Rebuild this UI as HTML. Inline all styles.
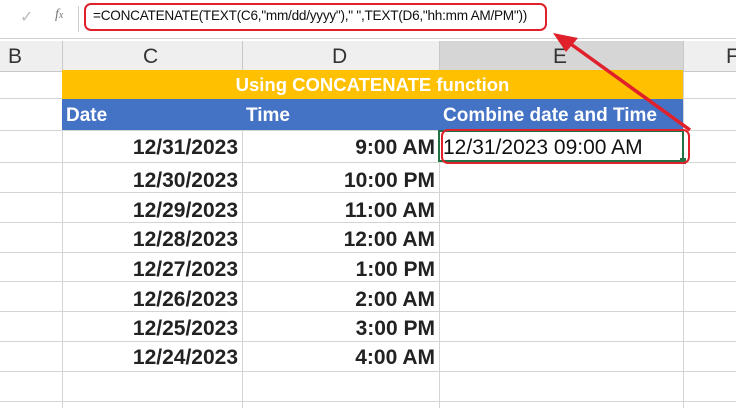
<!DOCTYPE html>
<html><head><style>
body{margin:0;width:736px;height:408px;background:#fff;font-family:"Liberation Sans",sans-serif;position:relative;overflow:hidden}
.a{position:absolute}
.vl{position:absolute;width:1px;background:#d4d4d4;top:72px;height:336px}
.hl{position:absolute;height:1px;background:#d4d4d4;left:0;width:736px}
.d{position:absolute;font-weight:bold;font-size:21px;color:#222;text-align:right}
</style></head><body>
<div class="a" style="left:0;top:0;width:736px;height:38px;background:#fff;border-bottom:1px solid #d0d0d0"></div>
<div class="a" style="left:20px;top:7px;color:#bbb;font-size:16px">✓</div>
<div class="a" style="left:55px;top:7px;color:#777;font-size:14px;font-style:italic;font-family:'Liberation Serif',serif">f<span style="font-size:10px">x</span></div>
<div class="a" style="left:78px;top:6px;width:1px;height:26px;background:#ccc"></div>
<div class="a" style="left:84px;top:3px;width:463px;height:28px;border:2px solid #e0202a;border-radius:7px;box-sizing:border-box"></div>
<div class="a" style="left:93px;top:8px;font-size:13.6px;color:#111;letter-spacing:-0.25px">=CONCATENATE(TEXT(C6,"mm/dd/yyyy")," ",TEXT(D6,"hh:mm AM/PM"))</div>
<div class="a" style="left:0;top:41px;width:736px;height:30px;background:#efefef;border-bottom:1px solid #c8c8c8"></div>
<div class="a" style="left:439px;top:41px;width:244px;height:29px;background:#d6d6d6;border-bottom:2px solid #217346"></div>
<div class="a" style="left:62px;top:41px;width:1px;height:30px;background:#c8c8c8"></div>
<div class="a" style="left:242px;top:41px;width:1px;height:30px;background:#c8c8c8"></div>
<div class="a" style="left:439px;top:41px;width:1px;height:30px;background:#c8c8c8"></div>
<div class="a" style="left:683px;top:41px;width:1px;height:30px;background:#c8c8c8"></div>
<div class="a" style="left:8px;top:45px;font-size:21px;color:#333">B</div>
<div class="a" style="left:143px;top:45px;font-size:21px;color:#333">C</div>
<div class="a" style="left:332px;top:45px;font-size:21px;color:#333">D</div>
<div class="a" style="left:553px;top:45px;font-size:21px;color:#333">E</div>
<div class="a" style="left:726px;top:45px;font-size:21px;color:#333">F</div>
<div class="vl" style="left:62px"></div><div class="vl" style="left:242px"></div><div class="vl" style="left:439px"></div><div class="vl" style="left:683px"></div>
<div class="hl" style="top:98px"></div><div class="hl" style="top:130px"></div><div class="hl" style="top:162px"></div><div class="hl" style="top:192px"></div><div class="hl" style="top:222px"></div><div class="hl" style="top:252px"></div><div class="hl" style="top:281px"></div><div class="hl" style="top:311px"></div><div class="hl" style="top:341px"></div><div class="hl" style="top:371px"></div><div class="hl" style="top:401px"></div>
<div class="a" style="left:62px;top:70px;width:621px;height:29px;background:#ffc000;color:#fff;font-weight:bold;font-size:18.5px;text-align:center;line-height:29px">Using CONCATENATE function</div>
<div class="a" style="left:62px;top:99px;width:621px;height:31px;background:#4472c4;color:#fff;font-weight:bold;font-size:19px;line-height:33px">
<span class="a" style="left:4px">Date</span><span class="a" style="left:184px">Time</span><span class="a" style="left:381px">Combine date and Time</span></div>
<div class="d" style="left:62px;width:176px;top:136px">12/31/2023</div><div class="d" style="left:242px;width:193px;top:136px">9:00 AM</div>
<div class="d" style="left:62px;width:176px;top:169px">12/30/2023</div><div class="d" style="left:242px;width:193px;top:169px">10:00 PM</div>
<div class="d" style="left:62px;width:176px;top:199px">12/29/2023</div><div class="d" style="left:242px;width:193px;top:199px">11:00 AM</div>
<div class="d" style="left:62px;width:176px;top:228px">12/28/2023</div><div class="d" style="left:242px;width:193px;top:228px">12:00 AM</div>
<div class="d" style="left:62px;width:176px;top:258px">12/27/2023</div><div class="d" style="left:242px;width:193px;top:258px">1:00 PM</div>
<div class="d" style="left:62px;width:176px;top:288px">12/26/2023</div><div class="d" style="left:242px;width:193px;top:288px">2:00 AM</div>
<div class="d" style="left:62px;width:176px;top:317px">12/25/2023</div><div class="d" style="left:242px;width:193px;top:317px">3:00 PM</div>
<div class="d" style="left:62px;width:176px;top:346px">12/24/2023</div><div class="d" style="left:242px;width:193px;top:346px">4:00 AM</div>
<div class="a" style="left:438px;top:130px;width:246px;height:32px;border:2px solid #217346;box-sizing:border-box"></div>
<div class="a" style="left:680px;top:158px;width:6px;height:6px;background:#217346"></div>
<div class="a" style="left:441px;top:129px;width:249px;height:35px;border:2px solid #e0202a;border-radius:7px;box-sizing:border-box"></div>
<div class="a" style="left:443px;top:136px;font-size:21px;color:#111">12/31/2023 09:00 AM</div>
<svg class="a" style="left:0;top:0" width="736" height="408">
<line x1="690" y1="130" x2="568" y2="42" stroke="#e0202a" stroke-width="3.5"/>
<polygon points="553,33 578,38 566,52" fill="#e0202a"/>
</svg>
</body></html>
